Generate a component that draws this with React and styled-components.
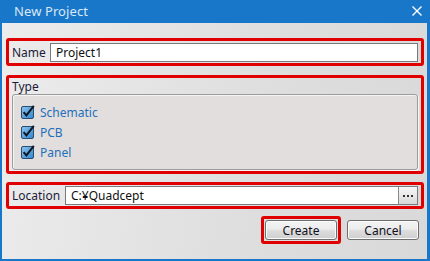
import styled, { createGlobalStyle } from "styled-components";

const GlobalStyle = createGlobalStyle`
  html, body {
    margin: 0;
    padding: 0;
    background: #ffffff;
  }
  body {
    font-family: "Noto Sans", "Open Sans", sans-serif;
  }
`;

const Window = styled.div`
  width: 430px;
  height: 261px;
  background: #1877c9;
  display: flex;
  flex-direction: column;
  box-sizing: border-box;
  padding: 0 3px 2px 2px;
`;

const TitleBar = styled.div`
  height: 23px;
  display: flex;
  align-items: center;
  justify-content: space-between;
  padding: 0 4px 0 12px;
  flex-shrink: 0;
`;

const Title = styled.span`
  color: #dce7f4;
  font-size: 13px;
  letter-spacing: 0.1px;
  margin-top: -1px;
`;

const CloseIcon = styled.svg`
  width: 12px;
  height: 12px;
  margin-top: -2px;
`;

const Client = styled.div`
  flex: 1;
  background: linear-gradient(100deg, #ececec 0%, #dedede 60%, #d9d9d9 100%);
  display: flex;
  flex-direction: column;
  padding: 15px 3px 0 4px;
  box-sizing: border-box;
`;

const RedBox = styled.div`
  border: 3px solid #e00000;
  border-radius: 3px;
  box-sizing: border-box;
  margin-bottom: ${(p) => p.$gap || 0}px;
`;

const Row = styled(RedBox)`
  height: ${(p) => p.$h}px;
  display: flex;
  align-items: center;
  padding: 0 2px 0 3px;
`;

const Label = styled.span`
  width: ${(p) => p.$w}px;
  flex-shrink: 0;
  font-size: 12px;
  color: #1c1c3a;
`;

const Field = styled.div`
  flex: 1;
  height: ${(p) => p.$h}px;
  background: #ffffff;
  border: 1px solid #7a7a7a;
  box-sizing: border-box;
  display: flex;
  align-items: center;
  margin-right: 1px;
`;

const FieldText = styled.span`
  flex: 1;
  padding-left: 5px;
  font-size: 12px;
  color: #101010;
`;

const BrowseButton = styled.div`
  width: 19px;
  align-self: stretch;
  border-left: 1px solid #8a8a8a;
  background: linear-gradient(#f8f8f8, #e8e8e8 50%, #d8d8d8);
  display: flex;
  align-items: center;
  justify-content: center;
  box-sizing: border-box;
`;

const TypeBox = styled(RedBox)`
  height: 99px;
  padding: 0 3px 1px 3px;
  display: flex;
  flex-direction: column;
`;

const TypeLabel = styled.div`
  height: 16px;
  display: flex;
  align-items: center;
  font-size: 12px;
  color: #1c1c3a;
`;

const Group = styled.div`
  flex: 1;
  background: #e1dedd;
  border: 1px solid #9c9c9c;
  border-radius: 3px;
  box-shadow: inset 1px 1px 0 #f4f4f4, 1px 1px 0 #f6f6f6;
  padding: 7px 8px;
  display: flex;
  flex-direction: column;
`;

const CheckRow = styled.label`
  height: 20px;
  display: flex;
  align-items: center;
  gap: 5px;
  font-size: 12px;
  color: #1f6fbb;
`;

const Buttons = styled.div`
  display: flex;
  justify-content: flex-end;
  align-items: center;
  gap: 6px;
  padding-right: 5px;
`;

const Highlight = styled.div`
  border: 3px solid #e00000;
  border-radius: 3px;
  padding: 1px;
`;

const Button = styled.button`
  width: 72px;
  height: 20px;
  border: 1px solid #6e6e6e;
  border-radius: 3px;
  background: linear-gradient(#f4f4f4 0%, #ececec 45%, #dcdcdc 55%, #cfcfcf 100%);
  box-shadow: inset 0 0 0 1px #fbfbfb;
  font-family: "Noto Sans", "Open Sans", sans-serif;
  font-size: 12px;
  color: #101020;
  padding: 0;
  display: block;
`;

const Check = () => (
  <svg width="14" height="14" viewBox="0 0 14 14">
    <defs>
      <linearGradient id="cb" x1="0" y1="0" x2="1" y2="1">
        <stop offset="0" stopColor="#8cc4ef" />
        <stop offset="1" stopColor="#2f86cf" />
      </linearGradient>
    </defs>
    <rect x="0.5" y="1.5" width="12" height="12" rx="1.5" fill="url(#cb)" stroke="#2a4c6e" />
    <path d="M2.6 7.2 L5.4 10.4 L12.8 0.8" fill="none" stroke="#0d1826" strokeWidth="2" />
  </svg>
);

const Dots = () => (
  <svg width="11" height="4" viewBox="0 0 11 4">
    <rect x="0" y="1" width="2" height="2" fill="#333" />
    <rect x="4" y="1" width="2" height="2" fill="#333" />
    <rect x="8" y="1" width="2" height="2" fill="#333" />
  </svg>
);

const App = () => {
  const types = ["Schematic", "PCB", "Panel"];
  return (
    <>
      <GlobalStyle />
      <Window>
        <TitleBar>
          <Title>New Project</Title>
          <CloseIcon viewBox="0 0 12 12">
            <path d="M1.5 1.5 L10.5 10.5 M10.5 1.5 L1.5 10.5" stroke="#ffffff" strokeWidth="1.4" />
          </CloseIcon>
        </TitleBar>
        <Client>
          <Row $h={28} $gap={9}>
            <Label $w={38}>Name</Label>
            <Field $h={19}>
              <FieldText>Project1</FieldText>
            </Field>
          </Row>
          <TypeBox $gap={8}>
            <TypeLabel>Type</TypeLabel>
            <Group>
              {types.map((t) => (
                <CheckRow key={t}>
                  <Check />
                  {t}
                </CheckRow>
              ))}
            </Group>
          </TypeBox>
          <Row $h={27} $gap={7}>
            <Label $w={53}>Location</Label>
            <Field $h={19}>
              <FieldText>C:¥Quadcept</FieldText>
              <BrowseButton>
                <Dots />
              </BrowseButton>
            </Field>
          </Row>
          <Buttons>
            <Highlight>
              <Button>Create</Button>
            </Highlight>
            <Button>Cancel</Button>
          </Buttons>
        </Client>
      </Window>
    </>
  );
};

export default App;
